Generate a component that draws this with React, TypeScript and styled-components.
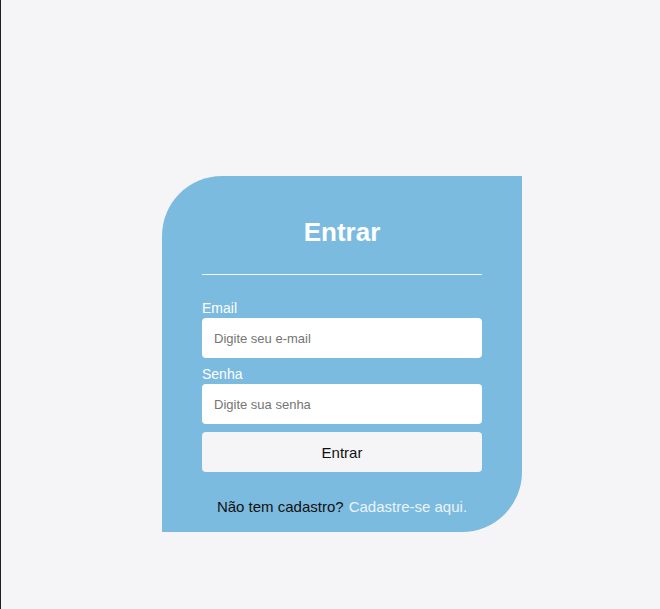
import React from "react";
import styled, { createGlobalStyle } from "styled-components";

const Global = createGlobalStyle`
  html, body { margin: 0; padding: 0; background: #f5f5f7; }
  body { font-family: "Liberation Sans", Arial, sans-serif; }
  * { box-sizing: border-box; }
`;

const Page = styled.div`
  min-height: 609px;
  border-left: 1px solid #1f1f1f;
  background: #f5f5f7;
  padding: 176px 0 0 161px;
`;

const Card = styled.form`
  width: 360px;
  height: 356px;
  background: #7bbbdf;
  border-radius: 60px 0 60px 0;
  padding: 40px 40px 0;
  display: flex;
  flex-direction: column;
`;

const Title = styled.h1`
  margin: 0;
  color: #ffffff;
  font-size: 26px;
  font-weight: 700;
  text-align: center;
  line-height: 32px;
`;

const Divider = styled.hr`
  margin: 26px 0 0;
  border: none;
  border-top: 1px solid #ffffff;
  height: 0;
  opacity: 0.9;
`;

const Field = styled.label<{ $top: number }>`
  display: flex;
  flex-direction: column;
  margin-top: ${(p) => p.$top}px;
`;

const Label = styled.span`
  color: #ffffff;
  font-size: 14px;
  line-height: 16px;
  height: 10px;
  overflow: visible;
  font-weight: 300;
`;

const Input = styled.input`
  margin-top: 8px;
  height: 40px;
  border: none;
  border-radius: 4px;
  background: #ffffff;
  padding: 0 12px;
  font-family: "Liberation Sans", Arial, sans-serif;
  font-size: 13px;
  color: #333;
  outline: none;
  &::placeholder { color: #757575; }
`;

const Button = styled.button`
  margin-top: 8px;
  height: 40px;
  border: none;
  border-radius: 4px;
  background: #f5f5f7;
  color: #111;
  font-family: "Liberation Sans", Arial, sans-serif;
  font-size: 15px;
  cursor: pointer;
`;

const Footer = styled.p`
  margin: 27px 0 0;
  text-align: center;
  font-size: 15px;
  line-height: 16px;
  color: #111;
`;

const Link = styled.a`
  color: #eaf4fb;
  text-decoration: none;
  margin-left: 5px;
`;

export default function App() {
  return (
    <>
      <Global />
      <Page>
        <Card onSubmit={(e) => e.preventDefault()}>
          <Title>Entrar</Title>
          <Divider />
          <Field $top={25}>
            <Label>Email</Label>
            <Input type="email" placeholder="Digite seu e-mail" />
          </Field>
          <Field $top={8}>
            <Label>Senha</Label>
            <Input type="password" placeholder="Digite sua senha" />
          </Field>
          <Button type="submit">Entrar</Button>
          <Footer>
            Não tem cadastro?<Link href="#">Cadastre-se aqui.</Link>
          </Footer>
        </Card>
      </Page>
    </>
  );
}
